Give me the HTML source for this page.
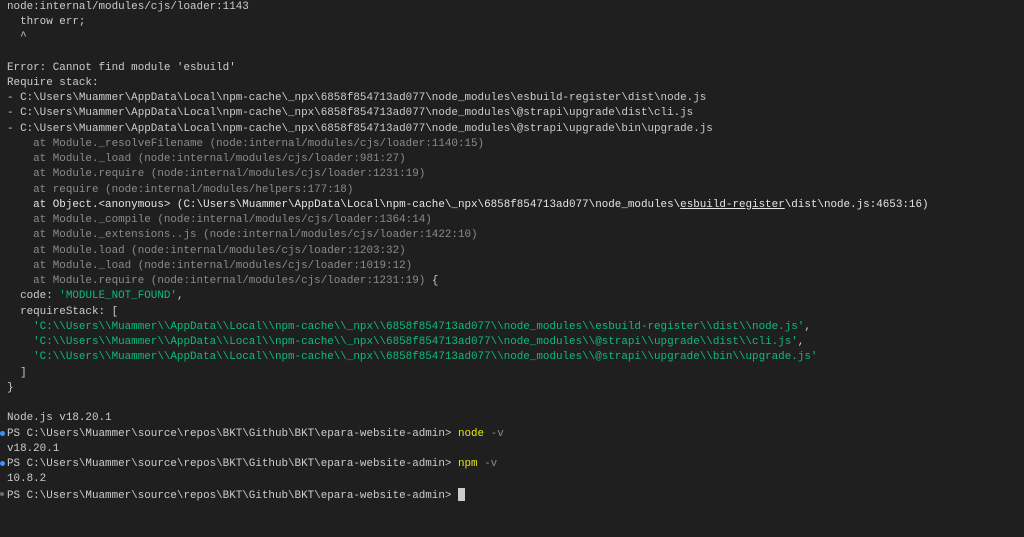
<!DOCTYPE html>
<html><head><meta charset="utf-8"><style>
html,body{margin:0;padding:0;background:#1f1f1f;width:1024px;height:537px;overflow:hidden}
pre{position:absolute;left:7px;top:-0.5px;margin:0;font-family:"Liberation Mono",monospace;font-size:10.9px;line-height:15.25px;color:#cccccc;white-space:pre}
.g{color:#8b8b8b}.s{color:#0dbc79}.y{color:#e5e510}.w{color:#e5e5e5}.d{color:#8b8b8b}
.dot{position:absolute;left:0;width:5px;height:5px;border-radius:50%;background:#3794ff}
.cur{display:inline-block;width:7px;height:13px;background:#cccccc;vertical-align:-3px}
u{text-decoration:underline}
</style></head><body>
<div class="dot" style="top:431px"></div>
<div class="dot" style="top:461px"></div>
<div class="dot" style="top:492px;background:#6e6e6e;width:4px;height:4px"></div>
<pre>node:internal/modules/cjs/loader:1143
  throw err;
  ^

Error: Cannot find module 'esbuild'
Require stack:
- C:\Users\Muammer\AppData\Local\npm-cache\_npx\6858f854713ad077\node_modules\esbuild-register\dist\node.js
- C:\Users\Muammer\AppData\Local\npm-cache\_npx\6858f854713ad077\node_modules\@strapi\upgrade\dist\cli.js
- C:\Users\Muammer\AppData\Local\npm-cache\_npx\6858f854713ad077\node_modules\@strapi\upgrade\bin\upgrade.js
<span class="g">    at Module._resolveFilename (node:internal/modules/cjs/loader:1140:15)
    at Module._load (node:internal/modules/cjs/loader:981:27)
    at Module.require (node:internal/modules/cjs/loader:1231:19)
    at require (node:internal/modules/helpers:177:18)</span>
<span class="w">    at Object.&lt;anonymous&gt; (C:\Users\Muammer\AppData\Local\npm-cache\_npx\6858f854713ad077\node_modules\<u>esbuild-register</u>\dist\node.js:4653:16)</span>
<span class="g">    at Module._compile (node:internal/modules/cjs/loader:1364:14)
    at Module._extensions..js (node:internal/modules/cjs/loader:1422:10)
    at Module.load (node:internal/modules/cjs/loader:1203:32)
    at Module._load (node:internal/modules/cjs/loader:1019:12)
    at Module.require (node:internal/modules/cjs/loader:1231:19)</span> {
  code: <span class="s">'MODULE_NOT_FOUND'</span>,
  requireStack: [
<span class="s">    'C:\\Users\\Muammer\\AppData\\Local\\npm-cache\\_npx\\6858f854713ad077\\node_modules\\esbuild-register\\dist\\node.js'</span>,
<span class="s">    'C:\\Users\\Muammer\\AppData\\Local\\npm-cache\\_npx\\6858f854713ad077\\node_modules\\@strapi\\upgrade\\dist\\cli.js'</span>,
<span class="s">    'C:\\Users\\Muammer\\AppData\\Local\\npm-cache\\_npx\\6858f854713ad077\\node_modules\\@strapi\\upgrade\\bin\\upgrade.js'</span>
  ]
}

Node.js v18.20.1
PS C:\Users\Muammer\source\repos\BKT\Github\BKT\epara-website-admin&gt; <span class="y">node</span> <span class="d">-v</span>
v18.20.1
PS C:\Users\Muammer\source\repos\BKT\Github\BKT\epara-website-admin&gt; <span class="y">npm</span> <span class="d">-v</span>
10.8.2
PS C:\Users\Muammer\source\repos\BKT\Github\BKT\epara-website-admin&gt; <span class="cur"></span></pre>
</body></html>
